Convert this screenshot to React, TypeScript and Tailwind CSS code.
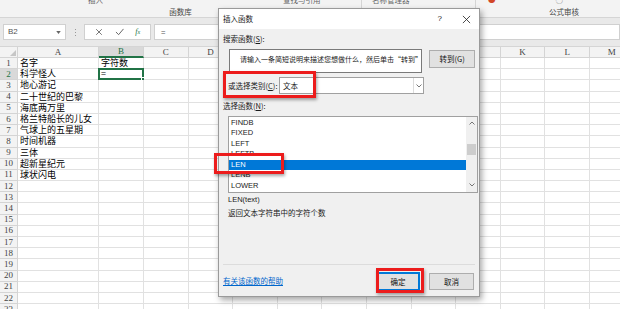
import React from "react";

const CJK = "font-['Microsoft_YaHei','Noto_Sans_CJK_SC',sans-serif]";
const SERIF = "font-['SimSun','Liberation_Serif','Noto_Sans_CJK_SC',serif]";

const cols = ["A", "B", "C", "D", "E", "F", "G", "H", "I", "J", "K", "L", "M"];
// columns E–J sit under the dialog, their letters are never seen
const hiddenCols = ["E", "F", "G", "H", "I", "J"];
const colA: Record<number, string> = {
  1: "名字",
  2: "科学怪人",
  3: "地心游记",
  4: "二十世纪的巴黎",
  5: "海底两万里",
  6: "格兰特船长的儿女",
  7: "气球上的五星期",
  8: "时间机器",
  9: "三体",
  10: "超新星纪元",
  11: "球状闪电",
};
const colB: Record<number, string> = { 1: "字符数", 2: "=" };
const funcs = ["FINDB", "FIXED", "LEFT", "LEFTB", "LEN", "LENB", "LOWER"];

const grid = "grid grid-cols-[18px_81px_45px_repeat(11,44.6px)]";

function SheetRow({ n }: { n: number }) {
  const active = n === 2;
  return (
    <div className={`${grid} h-[11.2px]`}>
      <div
        className={`${SERIF} flex items-center justify-center text-[9px] leading-none border-r border-b border-[#d4d4d4] ${
          active ? "bg-[#d9d9d9] text-[#217346]" : "bg-[#f3f3f3] text-[#444]"
        }`}
      >
        {n}
      </div>
      {cols.map((c) => (
        <div
          key={c}
          className={`relative border-r border-b border-[#e1e1e1] ${CJK} text-[9px] leading-[10px] text-black pl-[2px] whitespace-nowrap overflow-visible`}
        >
          {c === "A" && colA[n]}
          {c === "B" && colB[n]}
          {c === "B" && active && (
            <div className="absolute -left-px -top-px -right-px -bottom-px border-2 border-[#217346]">
              <div className="absolute -right-[3px] -bottom-[3px] w-[4px] h-[4px] bg-[#217346] border border-white" />
            </div>
          )}
        </div>
      ))}
    </div>
  );
}

function Button({ label, primary }: { label: string; primary?: boolean }) {
  return (
    <div
      className={`flex items-center justify-center h-full w-full bg-[#e1e1e1] border ${
        primary ? "border-[#0078d7] shadow-[inset_0_0_0_1px_#0078d7]" : "border-[#adadad]"
      } text-[7.5px] text-[#111]`}
    >
      {label}
    </div>
  );
}

function Dialog() {
  return (
    <div
      className={`absolute left-[218px] top-[8px] w-[262px] h-[289px] bg-[#f0f0f0] border border-[#9a9a9a] shadow-[2px_3px_6px_rgba(0,0,0,0.35)] flex flex-col ${CJK} text-[#1a1a1a]`}
    >
      {/* title */}
      <div className="h-[20px] bg-white flex items-center pl-[4px] pr-[8px] text-[7.5px] shrink-0">
        <span className="flex-1">插入函数</span>
        <span className="font-['Liberation_Sans'] text-[8px] mr-[20px]">?</span>
        <svg width="9" height="9" viewBox="0 0 10 10" className="text-[#222]">
          <path d="M1 1 L9 9 M9 1 L1 9" stroke="currentColor" strokeWidth="0.9" />
        </svg>
      </div>

      <div className="flex flex-col px-[4px] text-[7.5px] leading-[10px]">
        <div className="mt-[5px] h-[10px]">
          搜索函数(<span className="underline">S</span>):
        </div>

        <div className="mt-[5px] flex h-[24px]">
          <div className="ml-[6px] w-[195px] h-[24px] bg-white border border-[#7a7a7a] px-[10px] pt-[4px] text-[7px] whitespace-nowrap overflow-hidden">
            请输入一条简短说明来描述您想做什么，然后单击“转到”
          </div>
          <div className="ml-[7px] mt-[1px] w-[46px] h-[18px]">
            <Button label="转到(G)" />
          </div>
        </div>

        <div className="mt-[4px] flex items-center h-[17px]">
          <div className="ml-[5px] w-[51px] whitespace-nowrap">
            或选择类别(<span className="underline">C</span>):
          </div>
          <div className="w-[145px] h-[17px] bg-white border border-[#a0a0a0] flex items-center">
            <span className="flex-1 pl-[3px]">文本</span>
            <div className="w-[10px] h-full border-l border-[#dcdcdc] flex items-center justify-center">
              <svg width="6" height="4" viewBox="0 0 6 4">
                <path d="M0.5 0.5 L3 3 L5.5 0.5" fill="none" stroke="#555" strokeWidth="0.8" />
              </svg>
            </div>
          </div>
        </div>

        <div className="mt-[7px] h-[10px]">
          选择函数(<span className="underline">N</span>):
        </div>

        <div className="mt-[5px] ml-[5px] w-[250px] h-[77px] bg-white border border-[#a0a0a0] flex">
          <div className="flex-1 pt-[0.5px] font-['Segoe_UI','Liberation_Sans',sans-serif] text-[7.5px]">
            {funcs.map((f) => (
              <div
                key={f}
                className={`h-[10.6px] leading-[10.6px] pl-[2px] ${
                  f === "LEN" ? "bg-[#0078d7] text-white" : "text-[#222]"
                }`}
              >
                {f}
              </div>
            ))}
          </div>
          <div className="w-[11px] bg-[#f0f0f0] flex flex-col items-center">
            <svg width="6" height="4" viewBox="0 0 6 4" className="mt-[4px]">
              <path d="M0.5 3.5 L3 1 L5.5 3.5" fill="none" stroke="#555" strokeWidth="0.8" />
            </svg>
            <div className="mt-[19px] w-[9px] h-[11px] bg-[#cdcdcd]" />
            <div className="flex-1" />
            <svg width="6" height="4" viewBox="0 0 6 4" className="mb-[5px]">
              <path d="M0.5 0.5 L3 3 L5.5 0.5" fill="none" stroke="#555" strokeWidth="0.8" />
            </svg>
          </div>
        </div>

        <div className="mt-[2px] ml-[5px] h-[10px] font-['Segoe_UI','Liberation_Sans',sans-serif] text-[7.5px]">
          LEN(text)
        </div>
        <div className="mt-[3px] ml-[5px] h-[10px]">返回文本字符串中的字符个数</div>

        <div className="mt-[46px] h-px bg-[#dcdcdc]" />

        <div className="mt-[7px] flex h-[20px]">
          <div className="flex-1 pt-[4px]">
            <span className="text-[#0066cc] underline">有关该函数的帮助</span>
          </div>
          <div className="w-[44px] h-[19px]">
            <Button label="确定" primary />
          </div>
          <div className="ml-[9px] mr-[1px] mt-[1px] w-[45px] h-[17px]">
            <Button label="取消" />
          </div>
        </div>
      </div>
    </div>
  );
}

function RedBox({ cls }: { cls: string }) {
  return (
    <div
      className={`absolute border-[3px] border-[#ec1c1c] shadow-[1px_2px_3px_rgba(0,0,0,0.35)] ${cls}`}
    />
  );
}

export default function App() {
  const rows = Array.from({ length: 23 }, (_, i) => i + 1);
  return (
    <div className={`relative w-[620px] h-[309px] overflow-hidden bg-white ${CJK}`}>
      {/* ribbon bottom strip */}
      <div className="h-[18px] bg-[#f3f3f3] border-b border-[#d5d5d5] flex text-[7.5px] text-[#444] relative">
        <div className="w-[362px] border-r border-[#d5d5d5] flex flex-col items-center">
          <div className="h-[5px] w-full flex overflow-hidden">
            <span className="ml-[88px] -mt-[6px] text-[#666]">插入</span>
            <span className="ml-[180px] -mt-[6px] text-[#666]">查找与引用</span>
          </div>
          <span className="mt-[2px]">函数库</span>
        </div>
        <div className="w-[114px] border-r border-[#d5d5d5] flex">
          <span className="ml-[10px] -mt-[6px] text-[#666]">名称管理器</span>
        </div>
        <div className="flex-1 flex flex-col">
          <div className="h-[5px] w-full flex overflow-hidden">
            <span className="ml-[12px] -mt-[6px] text-[#d24726]">●</span>
            <span className="ml-[60px] -mt-[6px] text-[#666]">◌</span>
          </div>
          <span className="mt-[2px] ml-[73px]">公式审核</span>
        </div>
      </div>

      {/* formula bar */}
      <div className="h-[29px] bg-[#e9e9e9] flex items-center border-b border-[#d5d5d5]">
        <div className="ml-[3px] w-[63px] h-[16px] bg-white border border-[#d0d0d0] flex items-center">
          <span className="flex-1 pl-[4px] text-[8px] text-[#555] font-['Liberation_Sans']">B2</span>
          <svg width="5" height="3" viewBox="0 0 6 4" className="mr-[4px]">
            <path d="M0 0 L6 0 L3 4 Z" fill="#666" />
          </svg>
        </div>
        <div className="ml-[9px] flex flex-col gap-[2px]">
          <div className="w-px h-px bg-[#999]" />
          <div className="w-px h-px bg-[#999]" />
          <div className="w-px h-px bg-[#999]" />
        </div>
        <div className="ml-[8px] w-[67px] h-[16px] bg-white border border-[#d0d0d0] flex items-center justify-around px-[4px]">
          <svg width="8" height="8" viewBox="0 0 10 10">
            <path d="M1.5 1.5 L8.5 8.5 M8.5 1.5 L1.5 8.5" stroke="#555" strokeWidth="1" />
          </svg>
          <svg width="9" height="8" viewBox="0 0 10 9">
            <path d="M1 4.5 L4 7.5 L9.5 1" fill="none" stroke="#555" strokeWidth="1" />
          </svg>
          <span className="font-['Liberation_Serif'] italic text-[8px] text-[#217346]">
            f<span className="text-[6px]">x</span>
          </span>
        </div>
        <div className="ml-[3px] flex-1 h-[16px] bg-white border border-[#d0d0d0] flex items-center pl-[6px] text-[8px] text-[#555]">
          =
        </div>
      </div>

      {/* column headers */}
      <div className={`${grid} h-[11px]`}>
        <div className="bg-[#f3f3f3] border-r border-b border-[#d4d4d4] flex items-end justify-end p-[1px]">
          <div className="w-0 h-0 border-l-[6px] border-l-transparent border-b-[6px] border-b-[#c6c6c6]" />
        </div>
        {cols.map((c) => (
          <div
            key={c}
            className={`${SERIF} flex items-center justify-center text-[9px] leading-none border-r border-[#d4d4d4] ${
              c === "B"
                ? "bg-[#d9d9d9] text-[#217346] border-b-2 border-b-[#217346]"
                : "bg-[#f3f3f3] text-[#444] border-b"
            }`}
          >
            {hiddenCols.includes(c) ? null : c}
          </div>
        ))}
      </div>

      {rows.map((n) => (
        <SheetRow key={n} n={n} />
      ))}

      <Dialog />

      <RedBox cls="left-[223px] top-[71px] w-[93px] h-[27px]" />
      <RedBox cls="left-[214px] top-[153px] w-[70px] h-[21px]" />
      <RedBox cls="left-[376px] top-[268px] w-[48px] h-[25px]" />
    </div>
  );
}
